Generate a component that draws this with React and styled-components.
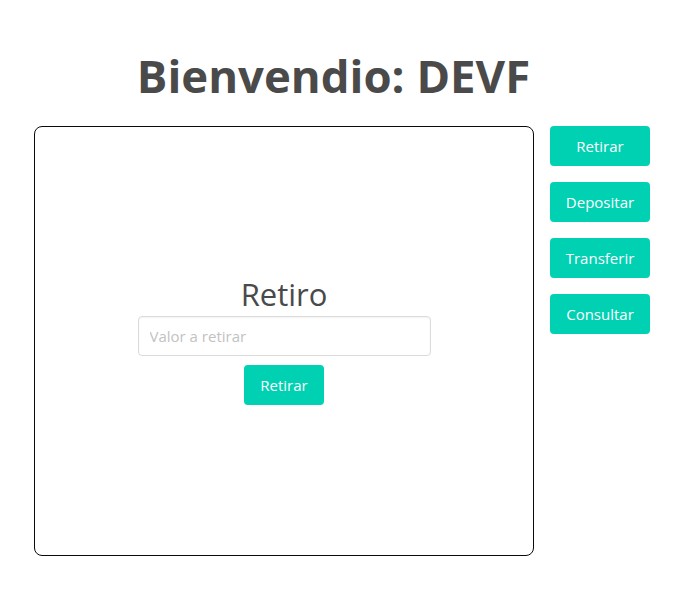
import React from 'react';
import styled, { createGlobalStyle } from 'styled-components';

const GlobalStyle = createGlobalStyle`
    body {
        margin: 0;
        background: #fff;
        font-family: 'Open Sans', 'Noto Sans', sans-serif;
        color: #4a4a4a;
    }
`;

const Page = styled.div`
    display: flex;
    flex-direction: column;
    padding: 48px 38px 0 34px;
`;

const Title = styled.h1`
    margin: 0 0 24px;
    padding-right: 17px;
    text-align: center;
    font-size: 45.5px;
    font-weight: 700;
    line-height: 54px;
    color: #4a4a4a;
`;

const Row = styled.div`
    display: flex;
    gap: 16px;
    align-items: flex-start;
`;

const Card = styled.div`
    width: 500px;
    height: 430px;
    box-sizing: border-box;
    border: 1px solid #0a0a0a;
    border-radius: 8px;
    display: flex;
    flex-direction: column;
    align-items: center;
    justify-content: center;
`;

const CardTitle = styled.h2`
    margin: 0;
    padding-bottom: 5px;
    font-size: 31px;
    font-weight: 400;
    line-height: 34px;
    color: #4a4a4a;
`;

const Input = styled.input`
    width: 293px;
    height: 40px;
    box-sizing: border-box;
    border: 1px solid #dbdbdb;
    border-radius: 4px;
    padding: 0 11px;
    font-family: inherit;
    font-size: 15px;
    color: #363636;
    box-shadow: inset 0 1px 2px rgba(10, 10, 10, 0.05);
    outline: none;
    &::placeholder {
        color: #c2c2c2;
    }
`;

const Button = styled.button`
    height: 40px;
    width: ${(p) => (p.wide ? '100px' : 'auto')};
    padding: 0 ${(p) => (p.wide ? '0' : '16px')};
    margin-top: ${(p) => p.top || '0'};
    border: none;
    border-radius: 4px;
    background: #00d1b2;
    color: #fff;
    font-family: inherit;
    font-size: 15px;
    cursor: pointer;
`;

const Menu = styled.div`
    display: flex;
    flex-direction: column;
    gap: 16px;
`;

const App = () => {
    const options = ['Retirar', 'Depositar', 'Transferir', 'Consultar'];
    return (
        <>
            <GlobalStyle />
            <Page>
                <Title>Bienvendio: DEVF</Title>
                <Row>
                    <Card>
                        <CardTitle>Retiro</CardTitle>
                        <Input type="number" placeholder="Valor a retirar" />
                        <Button top="9px">Retirar</Button>
                    </Card>
                    <Menu>
                        {options.map((o) => (
                            <Button key={o} wide>
                                {o}
                            </Button>
                        ))}
                    </Menu>
                </Row>
            </Page>
        </>
    );
};

export default App;
